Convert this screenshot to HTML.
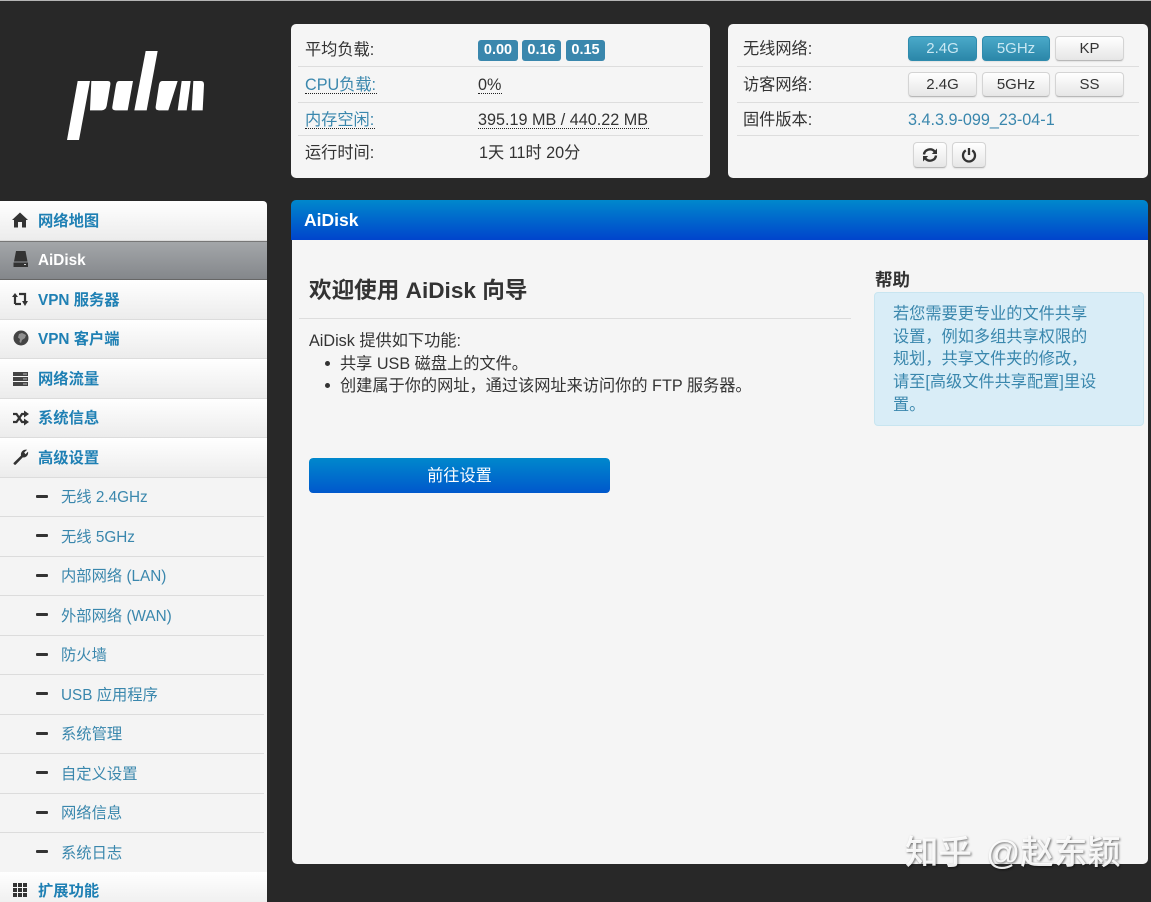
<!DOCTYPE html>
<html lang="zh-CN">
<head>
<meta charset="utf-8">
<title>AiDisk</title>
<style>
html,body{margin:0;padding:0;}
body{width:1151px;height:902px;position:relative;overflow:hidden;background:#282828;font-family:"Liberation Sans","Noto Sans CJK SC",sans-serif;font-size:16.2px;color:#333;}
.a{position:absolute;}
.t{position:absolute;white-space:nowrap;line-height:20px;height:20px;}
.panel{position:absolute;background:#f5f5f5;border-radius:5px;}
.hr{position:absolute;height:1px;background:#ddd;}
.lnk{color:#3a87ad;}
.dot{position:absolute;height:0;border-bottom:1px dotted #222;}
.badge{position:absolute;top:40px;height:21px;line-height:21px;text-align:center;background:#3a87ad;color:#fff;font-weight:bold;font-size:14.5px;border-radius:3px;}
.btn{position:absolute;box-sizing:border-box;height:25px;line-height:23px;text-align:center;border:1px solid #d4d4d4;border-bottom-color:#b8b8b8;border-radius:4px;background:linear-gradient(#ffffff,#e6e6e6);color:#333;font-size:15px;box-shadow:0 1px 1px rgba(0,0,0,.08);}
.btn.on{background:linear-gradient(#4aa9c9,#2b87a9);border-color:#2f8bad;color:#c9e8f3;}
.row{position:absolute;left:0;width:267px;height:39.5px;box-sizing:border-box;background:linear-gradient(#ffffff,#ececec);border-bottom:1px solid #dcdcdc;}
.row.act{background:linear-gradient(#a3a6a9,#84878b);border-top:1px solid #777;border-bottom:1px solid #666;}
.sub{position:absolute;left:0;width:267px;height:39.5px;background:#f4f4f4;}
.sub i{position:absolute;left:0;right:3px;bottom:0;height:1px;background:#dcdcdc;}
.m{position:absolute;left:38px;white-space:nowrap;font-weight:bold;font-size:15.3px;line-height:20px;color:#1f80b4;}
.s{position:absolute;left:61px;white-space:nowrap;font-size:15.3px;line-height:20px;color:#3a87ad;}
.min{position:absolute;left:36px;width:12px;height:3px;background:#333;border-radius:1px;}
svg.ic{position:absolute;left:12px;width:16px;height:16px;}
</style>
</head>
<body>
<div class="a" style="left:0;top:0;width:1151px;height:1px;background:#b5b5b5;"></div>

<!-- logo -->
<svg class="a" style="left:55px;top:40px;" width="160" height="110" viewBox="0 0 480 330">
<g fill="#ffffff">
<polygon points="68,123 105,123 72,300 36,300"/>
<path d="M109 123H158Q168 123 166 134L155 198Q152 211 140 211H105Z"/>
<path d="M192 123H234L218 211H182Q170 211 172 200L183 134Q185 123 192 123Z"/>
<polygon points="272,33 308,33 275,211 238,211"/>
<path d="M322 123H368L340 211H312Q300 211 302 200L312 134Q314 123 322 123Z"/>
<polygon points="380,123 407,123 395,211 368,211"/>
<path d="M415 123H438Q447 123 447 134L443 211H410Z"/>
</g>
</svg>

<!-- status panel -->
<div class="panel" style="left:291px;top:24px;width:419px;height:154px;"></div>
<div class="hr" style="left:298px;top:66px;width:405px;"></div>
<div class="hr" style="left:298px;top:102px;width:405px;"></div>
<div class="hr" style="left:298px;top:135px;width:405px;"></div>
<div class="t" style="left:305px;top:40px;">平均负载:</div>
<div class="badge" style="left:478px;width:40px;">0.00</div>
<div class="badge" style="left:522px;width:39px;">0.16</div>
<div class="badge" style="left:566px;width:39px;">0.15</div>
<div class="t lnk" style="left:305px;top:75px;">CPU负载:</div>
<div class="dot" style="left:305px;top:93px;width:72px;"></div>
<div class="t" style="left:478px;top:75px;">0%</div>
<div class="dot" style="left:478px;top:93px;width:24px;"></div>
<div class="t lnk" style="left:305px;top:110px;">内存空闲:</div>
<div class="dot" style="left:305px;top:128px;width:70px;"></div>
<div class="t" style="left:478px;top:110px;">395.19 MB / 440.22 MB</div>
<div class="dot" style="left:478px;top:128px;width:171px;"></div>
<div class="t" style="left:305px;top:143px;">运行时间:</div>
<div class="t" style="left:479px;top:143px;">1天 11时 20分</div>

<!-- wireless panel -->
<div class="panel" style="left:728px;top:24px;width:420px;height:154px;"></div>
<div class="hr" style="left:737px;top:66px;width:402px;"></div>
<div class="hr" style="left:737px;top:102px;width:402px;"></div>
<div class="hr" style="left:737px;top:135px;width:402px;"></div>
<div class="t" style="left:743px;top:39px;">无线网络:</div>
<div class="btn on" style="left:908px;top:36px;width:69px;">2.4G</div>
<div class="btn on" style="left:982px;top:36px;width:68px;">5GHz</div>
<div class="btn" style="left:1055px;top:36px;width:69px;">KP</div>
<div class="t" style="left:743px;top:75px;">访客网络:</div>
<div class="btn" style="left:908px;top:72px;width:69px;">2.4G</div>
<div class="btn" style="left:982px;top:72px;width:68px;">5GHz</div>
<div class="btn" style="left:1055px;top:72px;width:69px;">SS</div>
<div class="t" style="left:743px;top:110px;">固件版本:</div>
<div class="t lnk" style="left:908px;top:110px;">3.4.3.9-099_23-04-1</div>
<div class="btn" style="left:913px;top:142px;width:34px;height:26px;"></div>
<div class="btn" style="left:952px;top:142px;width:34px;height:26px;"></div>
<svg class="a" style="left:922px;top:147px;" width="16" height="16" viewBox="0 0 16 16" fill="none" stroke="#333" stroke-width="2.4">
<path d="M2 7.5A6 5.6 0 0 1 12.6 4.4"/><path d="M14 8.5A6 5.6 0 0 1 3.4 11.6"/>
<polygon points="15,1.5 15,7 9.8,7" fill="#333" stroke="none"/><polygon points="1,14.5 1,9 6.2,9" fill="#333" stroke="none"/>
</svg>
<svg class="a" style="left:961px;top:147px;" width="16" height="16" viewBox="0 0 16 16" fill="none" stroke="#333" stroke-width="2.3">
<path d="M4.8 3.4A6 6 0 1 0 11.2 3.4"/><path d="M8 1V8"/>
</svg>

<!-- sidebar -->
<div class="a" style="left:0;top:201px;width:267px;height:701px;overflow:hidden;border-radius:0 4px 0 0;">
<div class="row" style="top:0;"></div>
<div class="row act" style="top:39.5px;"></div>
<div class="row" style="top:79px;"></div>
<div class="row" style="top:118.5px;"></div>
<div class="row" style="top:158px;"></div>
<div class="row" style="top:197.5px;"></div>
<div class="row" style="top:237px;"></div>
<div class="sub" style="top:276.5px;"><i></i></div>
<div class="sub" style="top:316px;"><i></i></div>
<div class="sub" style="top:355.5px;"><i></i></div>
<div class="sub" style="top:395px;"><i></i></div>
<div class="sub" style="top:434.5px;"><i></i></div>
<div class="sub" style="top:474px;"><i></i></div>
<div class="sub" style="top:513.5px;"><i></i></div>
<div class="sub" style="top:553px;"><i></i></div>
<div class="sub" style="top:592.5px;"><i></i></div>
<div class="sub" style="top:632px;"></div>
<div class="row" style="top:671px;"></div>
</div>

<svg class="ic" style="top:212px;" viewBox="0 0 16 16"><path fill="#333" d="M8 0.5L16 8H14V15.5H10V10H6V15.5H2V8H0Z"/></svg>
<svg class="ic" style="top:251px;left:13px;" viewBox="0 0 16 16"><path fill="#333" d="M3 0H12.5L14.5 10.5H1Z"/><path fill="#333" d="M0.5 11.5H15V16H0.5Z"/><rect x="11" y="13" width="2" height="1" fill="#ccc"/></svg>
<svg class="ic" style="top:291px;" viewBox="0 0 16 16" fill="none" stroke="#333" stroke-width="2.2"><path d="M3 13H9"/><path d="M3 13V4"/><path d="M7 3H13V12"/><polygon points="0,6 6,6 3,2" fill="#333" stroke="none"/><polygon points="10,10 16,10 13,15" fill="#333" stroke="none"/></svg>
<svg class="ic" style="top:330px;left:13px;" viewBox="0 0 16 16"><circle cx="8" cy="8" r="7.5" fill="#444"/><path fill="#aaa" d="M9 3L13 5L12 8L9 10L8 13L6.5 12L7 9L5 7.5L6 4Z" opacity=".75"/></svg>
<svg class="ic" style="top:371px;left:13px;" viewBox="0 0 16 16"><g fill="#444"><rect y="1" width="15" height="4"/><rect y="6" width="15" height="4"/><rect y="11" width="15" height="4"/></g><g fill="#bbb"><rect x="10" y="2.5" width="4" height="1"/><rect x="10" y="7.5" width="4" height="1"/><rect x="10" y="12.5" width="4" height="1"/></g></svg>
<svg class="ic" style="top:410px;left:13px;" viewBox="0 0 16 16" fill="none" stroke="#333" stroke-width="2.2"><path d="M0 4H3.5L9 12H12"/><path d="M0 12H3.5L9 4H12"/><polygon points="11,0.5 16,4 11,7.5" fill="#333" stroke="none"/><polygon points="11,8.5 16,12 11,15.5" fill="#333" stroke="none"/></svg>
<svg class="ic" style="top:449px;left:13px;" viewBox="0 0 16 16"><path fill="#333" d="M0.5 14L8 6.6C7.4 3.6 9.5 0.6 13 0.6L14.2 0.8L11.2 3.4L12.5 5.2L15 2.6C15.8 6 13 9 9.8 8.4L2.6 15.8C1.8 16.2 0.2 15 0.5 14Z"/></svg>
<svg class="ic" style="top:883px;left:13px;" viewBox="0 0 16 16"><g fill="#333"><rect width="4" height="4"/><rect x="5" width="4" height="4"/><rect x="10" width="4" height="4"/><rect y="5" width="4" height="4"/><rect x="5" y="5" width="4" height="4"/><rect x="10" y="5" width="4" height="4"/><rect y="10" width="4" height="4"/><rect x="5" y="10" width="4" height="4"/><rect x="10" y="10" width="4" height="4"/></g></svg>

<div class="m" style="top:212px;">网络地图</div>
<div class="m" style="top:251px;color:#fff;">AiDisk</div>
<div class="m" style="top:291px;">VPN 服务器</div>
<div class="m" style="top:330px;">VPN 客户端</div>
<div class="m" style="top:370px;">网络流量</div>
<div class="m" style="top:409px;">系统信息</div>
<div class="m" style="top:449px;">高级设置</div>
<div class="s" style="top:488px;">无线 2.4GHz</div>
<div class="s" style="top:528px;">无线 5GHz</div>
<div class="s" style="top:567px;">内部网络 (LAN)</div>
<div class="s" style="top:607px;">外部网络 (WAN)</div>
<div class="s" style="top:646px;">防火墙</div>
<div class="s" style="top:686px;">USB 应用程序</div>
<div class="s" style="top:725px;">系统管理</div>
<div class="s" style="top:765px;">自定义设置</div>
<div class="s" style="top:804px;">网络信息</div>
<div class="s" style="top:844px;">系统日志</div>
<div class="m" style="top:882px;">扩展功能</div>
<div class="min" style="top:495px;"></div>
<div class="min" style="top:534px;"></div>
<div class="min" style="top:574px;"></div>
<div class="min" style="top:613px;"></div>
<div class="min" style="top:653px;"></div>
<div class="min" style="top:692px;"></div>
<div class="min" style="top:732px;"></div>
<div class="min" style="top:771px;"></div>
<div class="min" style="top:811px;"></div>
<div class="min" style="top:850px;"></div>

<!-- main -->
<div class="a" style="left:292px;top:236px;width:856px;height:628px;background:#f5f5f5;border-radius:0 0 5px 5px;"></div>
<div class="a" style="left:291px;top:200px;width:857px;height:40px;background:linear-gradient(#0088cc,#0044cc);border-radius:5px 5px 0 0;"></div>
<div class="t" style="left:304px;top:210px;color:#fff;font-weight:bold;font-size:17.5px;">AiDisk</div>

<div class="t" style="left:309px;top:276px;height:30px;line-height:30px;font-weight:bold;font-size:22.6px;">欢迎使用 AiDisk 向导</div>
<div class="hr" style="left:299px;top:318px;width:552px;"></div>
<div class="t" style="left:309px;top:331px;">AiDisk 提供如下功能:</div>
<div class="a" style="left:325px;top:361px;width:5px;height:5px;border-radius:50%;background:#333;"></div>
<div class="t" style="left:340px;top:354px;">共享 USB 磁盘上的文件。</div>
<div class="a" style="left:325px;top:383px;width:5px;height:5px;border-radius:50%;background:#333;"></div>
<div class="t" style="left:340px;top:376px;">创建属于你的网址，通过该网址来访问你的 FTP 服务器。</div>

<div class="a" style="left:309px;top:458px;width:301px;height:37px;line-height:37px;text-align:center;background:linear-gradient(#0088cc,#0055cc);border-radius:4px;color:#fff;clip-path:inset(0 0 2px 0 round 4px);">前往设置</div>

<div class="t" style="left:875px;top:270px;font-weight:bold;font-size:17.5px;">帮助</div>
<div class="a" style="left:874px;top:292px;width:270px;height:134px;box-sizing:border-box;background:#d9edf7;border:1px solid #c8e5f0;border-radius:4px;"></div>
<div class="t lnk" style="left:893px;top:304px;">若您需要更专业的文件共享</div>
<div class="t lnk" style="left:893px;top:327px;">设置，例如多组共享权限的</div>
<div class="t lnk" style="left:893px;top:349px;">规划，共享文件夹的修改，</div>
<div class="t lnk" style="left:893px;top:372px;">请至[高级文件共享配置]里设</div>
<div class="t lnk" style="left:893px;top:395px;">置。</div>

<!-- watermark -->
<div class="t" style="left:905px;top:834px;height:40px;line-height:40px;font-size:33.5px;font-weight:500;word-spacing:5px;color:rgba(255,255,255,.92);text-shadow:1px 1px 2px rgba(0,0,0,.55);">知乎 @赵东颖</div>
</body>
</html>
